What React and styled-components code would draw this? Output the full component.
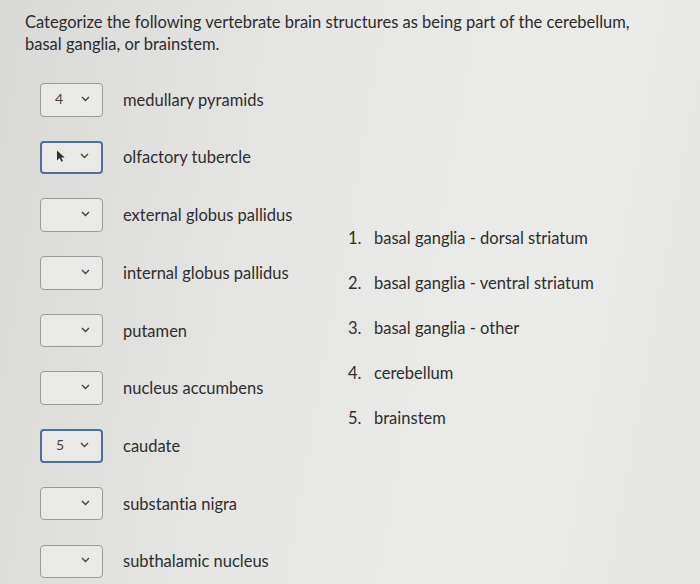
import React from 'react';
import styled, { createGlobalStyle } from 'styled-components';

const GlobalStyle = createGlobalStyle`
  html, body {
    margin: 0;
    padding: 0;
  }
  body {
    font-family: Lato, "Liberation Sans", sans-serif;
    font-variant-ligatures: none;
    color: #2e2e2e;
    background: #e4e4e2;
  }
`;

const rows = [
  { value: '4', label: 'medullary pyramids' },
  { value: '', label: 'olfactory tubercle', focused: true, cursor: true },
  { value: '', label: 'external globus pallidus' },
  { value: '', label: 'internal globus pallidus' },
  { value: '', label: 'putamen' },
  { value: '', label: 'nucleus accumbens' },
  { value: '5', label: 'caudate', focused: true },
  { value: '', label: 'substantia nigra' },
  { value: '', label: 'subthalamic nucleus' },
];

const options = [
  'basal ganglia - dorsal striatum',
  'basal ganglia - ventral striatum',
  'basal ganglia - other',
  'cerebellum',
  'brainstem',
];

const Chevron = () => (
  <svg width="9" height="6" viewBox="0 0 9 6">
    <path d="M1 1l3.5 3.5L8 1" fill="none" stroke="#444" strokeWidth="1.4" />
  </svg>
);

const Pointer = () => (
  <svg width="10" height="12" viewBox="0 0 10 12">
    <path d="M1 0.5v10l2.6-2.4 1.8 3.6 1.6-.8-1.8-3.5h3.5z" fill="#333" />
  </svg>
);

const App = () => {
  return (
    <Page>
      <GlobalStyle />
      <Question>
        Categorize the following vertebrate brain structures as being part of the cerebellum,
        basal ganglia, or brainstem.
      </Question>
      <Body>
        <Items>
          {rows.map((row) => (
            <Row key={row.label}>
              <Select $focused={row.focused}>
                <SelectValue>{row.cursor ? <Pointer /> : row.value}</SelectValue>
                <Chevron />
              </Select>
              <Label>{row.label}</Label>
            </Row>
          ))}
        </Items>
        <Choices>
          {options.map((opt, i) => (
            <Choice key={opt}>
              <ChoiceNum>{i + 1}.</ChoiceNum>
              <span>{opt}</span>
            </Choice>
          ))}
        </Choices>
      </Body>
    </Page>
  );
};

const Page = styled.div`
  width: 700px;
  height: 584px;
  box-sizing: border-box;
  padding: 11px 0 0 25px;
  overflow: hidden;
  background: linear-gradient(100deg, #d9d9d7 0%, #e6e6e4 40%, #ebebe9 75%, #e4e4e2 100%);
`;

const Question = styled.p`
  margin: 0;
  width: 640px;
  font-size: 16.5px;
  line-height: 22px;
  color: #2c2c2c;
`;

const Body = styled.div`
  display: flex;
  margin-top: 28px;
`;

const Items = styled.div`
  display: flex;
  flex-direction: column;
  gap: 24.2px;
  padding-left: 15px;
  width: 308px;
`;

const Row = styled.div`
  display: flex;
  align-items: center;
  gap: 20px;
  height: 33.5px;
`;

const Select = styled.div`
  box-sizing: border-box;
  width: 63px;
  height: 33.5px;
  display: flex;
  align-items: center;
  justify-content: space-between;
  padding: 0 12px 2px 14px;
  border: ${(p) => (p.$focused ? '2px solid #4f6f9a' : '1px solid #9a9a9a')};
  border-radius: 4px;
  background: #e9e9e7;
`;

const SelectValue = styled.span`
  font-size: 14px;
  color: #444;
  display: flex;
  align-items: center;
`;

const Label = styled.span`
  font-size: 16.5px;
  color: #2e2e2e;
`;

const Choices = styled.ol`
  list-style: none;
  margin: 0;
  padding: 0;
  margin-top: 145px;
  display: flex;
  flex-direction: column;
  gap: 25px;
`;

const Choice = styled.li`
  display: flex;
  font-size: 16.5px;
  line-height: 20px;
  color: #2e2e2e;
`;

const ChoiceNum = styled.span`
  width: 26px;
`;

export default App;
